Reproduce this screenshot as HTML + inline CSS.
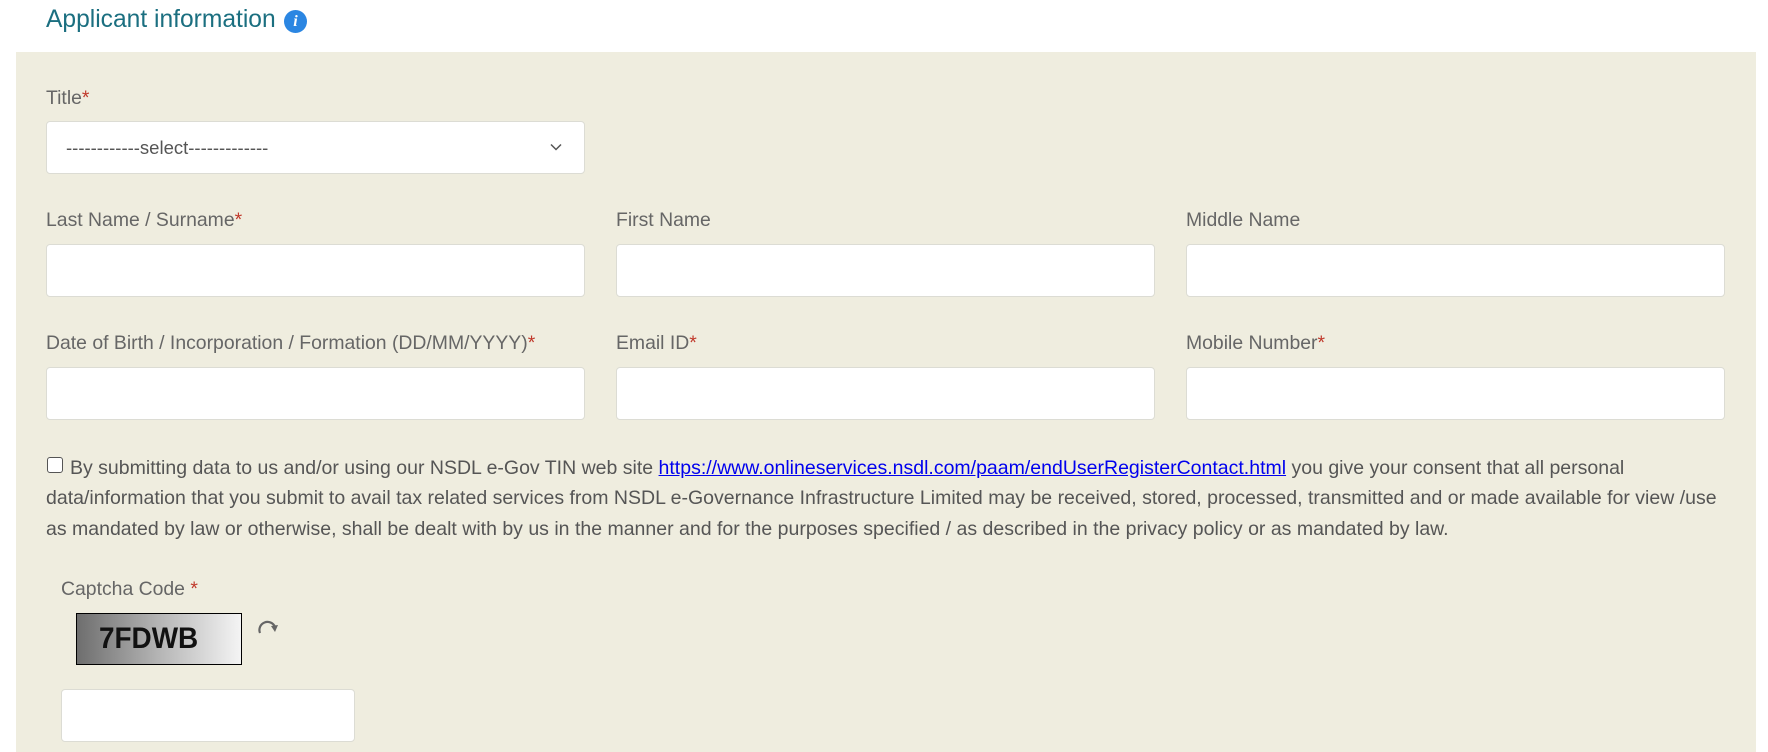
<!DOCTYPE html>
<html><head><meta charset="utf-8"><style>
*{box-sizing:border-box;margin:0;padding:0}
body{width:1768px;height:747px;overflow:hidden;background:#fff;font-family:"Liberation Sans",Arial,sans-serif;position:relative;color:#666}
.a{position:absolute}
h1{position:absolute;left:46px;top:6px;font-size:24.6px;font-weight:normal;color:#1b6f80;white-space:nowrap}
.info{left:284px;top:10px;width:23px;height:23px;border-radius:50%;background:#2b86e2;color:#fff;font:italic bold 16px "Liberation Serif",serif;text-align:center;line-height:23px}
.panel{left:16px;top:52px;width:1740px;height:700px;background:#efeddf}
.lbl{font-size:19.4px;color:#666;white-space:nowrap;line-height:22px}
.lbl b{color:#c0392b;font-weight:normal}
.inp{background:#fff;border:1px solid #dcdcd4;border-radius:4px;height:53px;width:539px}
.p{left:46px;font-size:19.5px;color:#555;white-space:nowrap;line-height:22px}
.p a{color:#0000ee;text-decoration:underline}
</style></head><body>
<h1>Applicant information</h1>
<div class="a info">i</div>
<div class="a panel"></div>

<div class="a lbl" style="left:46px;top:87px">Title<b>*</b></div>
<div class="a inp" style="left:46px;top:121px;padding:0 19px;font-size:18.5px;line-height:51px;color:#555">------------select-------------
<svg style="position:absolute;right:22px;top:21px" width="12" height="8" viewBox="0 0 12 8"><path d="M1 1.5L6 6.5 11 1.5" fill="none" stroke="#555" stroke-width="1.5"/></svg></div>

<div class="a lbl" style="left:46px;top:209px">Last Name / Surname<b>*</b></div>
<div class="a lbl" style="left:616px;top:209px">First Name</div>
<div class="a lbl" style="left:1186px;top:209px">Middle Name</div>
<div class="a inp" style="left:46px;top:244px"></div>
<div class="a inp" style="left:616px;top:244px"></div>
<div class="a inp" style="left:1186px;top:244px"></div>

<div class="a lbl" style="left:46px;top:332px">Date of Birth / Incorporation / Formation (DD/MM/YYYY)<b>*</b></div>
<div class="a lbl" style="left:616px;top:332px">Email ID<b>*</b></div>
<div class="a lbl" style="left:1186px;top:332px">Mobile Number<b>*</b></div>
<div class="a inp" style="left:46px;top:367px"></div>
<div class="a inp" style="left:616px;top:367px"></div>
<div class="a inp" style="left:1186px;top:367px"></div>

<div class="a" style="left:47px;top:457px;width:16px;height:16px;border:1.5px solid #555;border-radius:3px;background:#fff"></div>
<div class="a p" style="left:70px;top:457px">By submitting data to us and/or using our NSDL e-Gov TIN web site <a>https://www.onlineservices.nsdl.com/paam/endUserRegisterContact.html</a> you give your consent that all personal</div>
<div class="a p" style="top:487px">data/information that you submit to avail tax related services from NSDL e-Governance Infrastructure Limited may be received, stored, processed, transmitted and or made available for view /use</div>
<div class="a p" style="top:518px">as mandated by law or otherwise, shall be dealt with by us in the manner and for the purposes specified / as described in the privacy policy or as mandated by law.</div>

<div class="a lbl" style="left:61px;top:578px">Captcha Code <b>*</b></div>
<div class="a" style="left:76px;top:613px;width:166px;height:52px;border:1.5px solid #000;background:linear-gradient(90deg,#6e6e6e,#b5b5b5 50%,#f4f4f4);overflow:hidden"><span style="position:absolute;left:22px;top:0;font:bold 30px/50px 'Liberation Sans',sans-serif;color:#111;transform:scaleX(0.93);transform-origin:left center">7FDWB</span></div>
<svg class="a" style="left:256px;top:617px" width="26" height="24" viewBox="0 0 26 24"><path d="M4 16A8 8 0 1 1 19 10" fill="none" stroke="#666" stroke-width="2.2"/><path d="M15 9L22 8 19 15Z" fill="#666"/></svg>
<div class="a inp" style="left:61px;top:689px;width:294px;height:53px"></div>
</body></html>
